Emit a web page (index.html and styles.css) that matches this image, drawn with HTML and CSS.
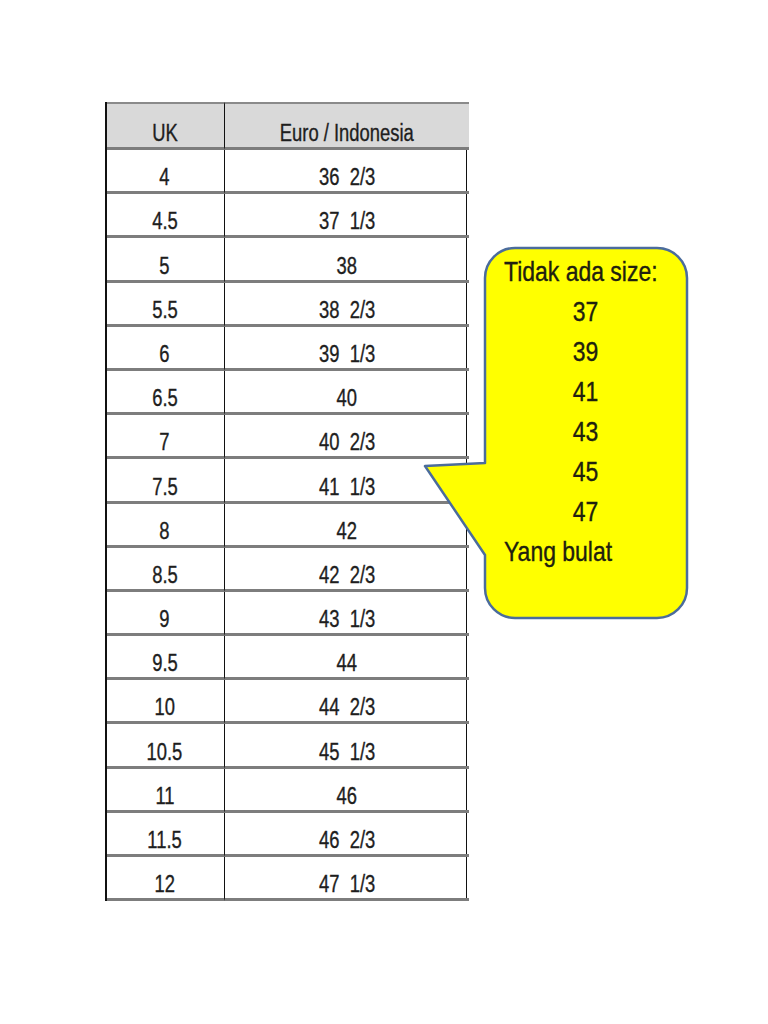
FILE: index.html
```html
<!DOCTYPE html>
<html lang="id">
<head>
<meta charset="utf-8">
<title>Ukuran Sepatu</title>
<link rel="stylesheet" href="styles.css">
</head>
<body>
<main class="page">
  <div class="size-table">
    <div class="cell head c1"><span class="t">UK</span></div><div class="cell head c2"><span class="t">Euro / Indonesia</span></div>
    <div class="cell c1"><span class="t">4</span></div><div class="cell c2"><span class="t">36&nbsp;&nbsp;2/3</span></div>
    <div class="cell c1"><span class="t">4.5</span></div><div class="cell c2"><span class="t">37&nbsp;&nbsp;1/3</span></div>
    <div class="cell c1"><span class="t">5</span></div><div class="cell c2"><span class="t">38</span></div>
    <div class="cell c1"><span class="t">5.5</span></div><div class="cell c2"><span class="t">38&nbsp;&nbsp;2/3</span></div>
    <div class="cell c1"><span class="t">6</span></div><div class="cell c2"><span class="t">39&nbsp;&nbsp;1/3</span></div>
    <div class="cell c1"><span class="t">6.5</span></div><div class="cell c2"><span class="t">40</span></div>
    <div class="cell c1"><span class="t">7</span></div><div class="cell c2"><span class="t">40&nbsp;&nbsp;2/3</span></div>
    <div class="cell c1"><span class="t">7.5</span></div><div class="cell c2"><span class="t">41&nbsp;&nbsp;1/3</span></div>
    <div class="cell c1"><span class="t">8</span></div><div class="cell c2"><span class="t">42</span></div>
    <div class="cell c1"><span class="t">8.5</span></div><div class="cell c2"><span class="t">42&nbsp;&nbsp;2/3</span></div>
    <div class="cell c1"><span class="t">9</span></div><div class="cell c2"><span class="t">43&nbsp;&nbsp;1/3</span></div>
    <div class="cell c1"><span class="t">9.5</span></div><div class="cell c2"><span class="t">44</span></div>
    <div class="cell c1"><span class="t">10</span></div><div class="cell c2"><span class="t">44&nbsp;&nbsp;2/3</span></div>
    <div class="cell c1"><span class="t">10.5</span></div><div class="cell c2"><span class="t">45&nbsp;&nbsp;1/3</span></div>
    <div class="cell c1"><span class="t">11</span></div><div class="cell c2"><span class="t">46</span></div>
    <div class="cell c1"><span class="t">11.5</span></div><div class="cell c2"><span class="t">46&nbsp;&nbsp;2/3</span></div>
    <div class="cell c1"><span class="t">12</span></div><div class="cell c2"><span class="t">47&nbsp;&nbsp;1/3</span></div>
  </div>

  <div class="callout">
    <svg class="callout-shape" viewBox="420 240 275 385" width="275" height="385" aria-hidden="true">
      <path d="M 515 248 H 657 A 30 30 0 0 1 687 278 V 588 A 30 30 0 0 1 657 618 H 515 A 30 30 0 0 1 485 588 V 555 L 425 466 L 485 463 V 278 A 30 30 0 0 1 515 248 Z" fill="#ffff00" stroke="#4b6c9c" stroke-width="2.5" stroke-linejoin="round"/>
    </svg>
    <div class="callout-text">
      <div class="line left"><span class="t">Tidak ada size:</span></div>
      <div class="line"><span class="t">37</span></div>
      <div class="line"><span class="t">39</span></div>
      <div class="line"><span class="t">41</span></div>
      <div class="line"><span class="t">43</span></div>
      <div class="line"><span class="t">45</span></div>
      <div class="line"><span class="t">47</span></div>
      <div class="line left"><span class="t">Yang bulat</span></div>
    </div>
  </div>
</main>
</body>
</html>
```

FILE: styles.css
```css
html, body {
  margin: 0;
  padding: 0;
  background: #ffffff;
}

.page {
  position: relative;
  width: 768px;
  height: 1024px;
  padding: 102px 0 0 105px;
  box-sizing: border-box;
  font-family: "Liberation Sans", Arial, sans-serif;
  color: #1e1e1e;
}

.t {
  display: inline-block;
  white-space: nowrap;
  transform: scaleX(0.8);
  transform-origin: center bottom;
  -webkit-text-stroke: 0.35px currentColor;
}

.size-table {
  display: grid;
  grid-template-columns: 118px 244px;
  grid-auto-rows: 44.2px;
  grid-template-rows: 48px;
  width: 362px;
  box-sizing: border-box;
  border-left: 2px solid #111111;
  border-right: 1px solid #111111;
}

.cell {
  display: flex;
  align-items: flex-end;
  justify-content: center;
  box-sizing: border-box;
  border-bottom: 3px solid #7d7d7d;
  padding-bottom: 2px;
  font-size: 23px;
  line-height: 1;
  white-space: nowrap;
}

.cell.c1 {
  border-right: 1px solid #111111;
  padding-right: 2px;
}

.cell.head {
  background: #d9d9d9;
  border-top: 2px solid #8a8a8a;
  font-size: 23px;
}

.callout {
  position: absolute;
  left: 420px;
  top: 240px;
  width: 275px;
  height: 385px;
}

.callout-shape {
  position: absolute;
  left: 0;
  top: 0;
  display: block;
}

.callout-text {
  position: absolute;
  left: 65px;
  top: 12px;
  width: 202px;
  display: flex;
  flex-direction: column;
  font-size: 28px;
  line-height: 40px;
  color: #20200f;
}

.callout-text .t {
  transform: scaleX(0.82);
}

.line {
  text-align: center;
  white-space: nowrap;
}

.line.left {
  text-align: left;
  padding-left: 19px;
}

.line.left .t {
  transform-origin: left bottom;
}
```
